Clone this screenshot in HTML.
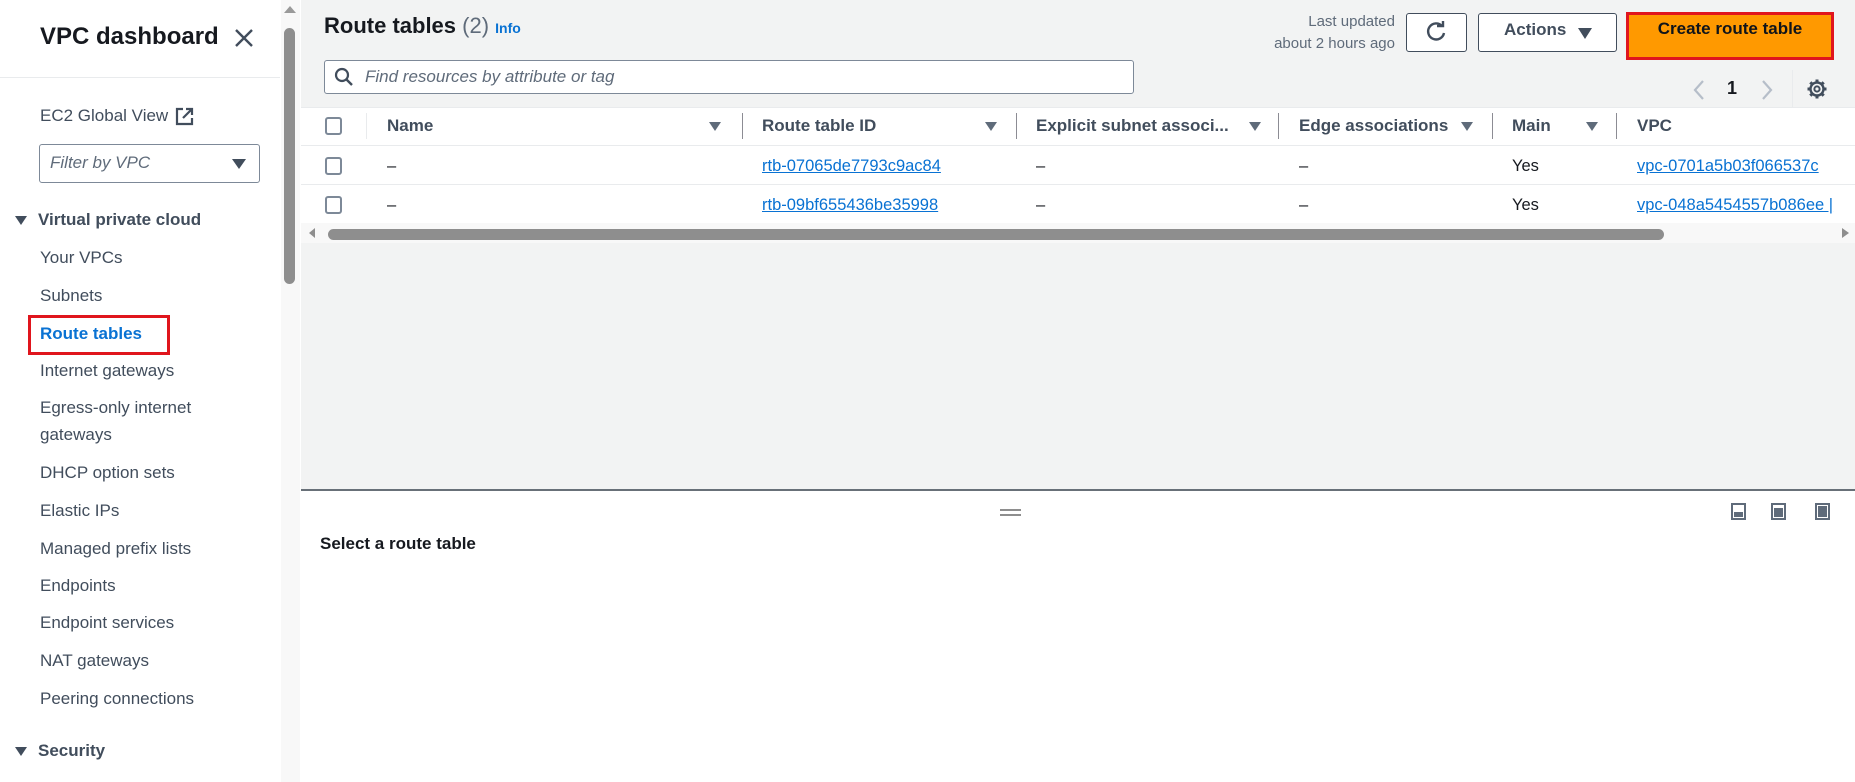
<!DOCTYPE html>
<html><head><meta charset="utf-8"><style>
*{box-sizing:border-box;margin:0;padding:0}
body{width:1855px;height:782px;overflow:hidden;font-family:"Liberation Sans",sans-serif;background:#fff;position:relative;color:#16191f}
.a{position:absolute;white-space:nowrap}
.nav{font-size:17px;color:#414d5c}
.hd{font-size:17px;font-weight:bold;color:#414d5c}
.cell{font-size:16.5px;color:#16191f}
.lnk{color:#0972d3;text-decoration:underline;font-size:16.5px}
.sep{position:absolute;width:1px;height:26px;background:#8c8c94;top:113px}
.tri{position:absolute;width:0;height:0;border-left:6px solid transparent;border-right:6px solid transparent;border-top:9px solid #5f6b7a}
.cb{position:absolute;left:325px;width:17px;height:18px;border:2px solid #7d8998;border-radius:3px;background:#fff}
</style></head><body>
<div class="a" style="left:0;top:0;width:300px;height:782px;border-right:1px solid #e9ebed;background:#fff"></div>
<div class="a" style="left:40px;top:23px;font-size:24px;font-weight:bold;color:#16191f">VPC dashboard</div>
<svg class="a" style="left:234px;top:28px" width="20" height="20" viewBox="0 0 20 20"><path d="M2 2L18 18M18 2L2 18" stroke="#414d5c" stroke-width="2.4"/></svg>
<div class="a" style="left:0;top:77px;width:280px;height:1px;background:#e9ebed"></div>
<div class="a nav" style="left:40px;top:106px">EC2 Global View</div>
<svg class="a" style="left:175px;top:107px" width="19" height="19" viewBox="0 0 19 19"><path d="M8 2H2V17H17V11M11 2H17V8M17 2L8 11" stroke="#414d5c" stroke-width="2.2" fill="none"/></svg>
<div class="a" style="left:39px;top:144px;width:221px;height:39px;border:1px solid #7d8998;border-radius:3px"></div>
<div class="a nav" style="left:50px;top:153px;font-style:italic;color:#5f6b7a">Filter by VPC</div>
<div class="tri" style="left:232px;top:159px;border-left-width:7px;border-right-width:7px;border-top-width:10px;border-top-color:#414d5c"></div>
<div class="tri" style="left:15px;top:216px;border-top-color:#414d5c"></div>
<div class="a hd" style="left:38px;top:210px">Virtual private cloud</div>
<div class="a nav" style="left:40px;top:248px">Your VPCs</div>
<div class="a nav" style="left:40px;top:286px">Subnets</div>
<div class="a" style="left:28px;top:315px;width:142px;height:40px;border:3px solid #e0151d"></div>
<div class="a nav" style="left:40px;top:324px;color:#0972d3;font-weight:bold">Route tables</div>
<div class="a nav" style="left:40px;top:361px">Internet gateways</div>
<div class="a nav" style="left:40px;top:398px">Egress-only internet</div>
<div class="a nav" style="left:40px;top:425px">gateways</div>
<div class="a nav" style="left:40px;top:463px">DHCP option sets</div>
<div class="a nav" style="left:40px;top:501px">Elastic IPs</div>
<div class="a nav" style="left:40px;top:539px">Managed prefix lists</div>
<div class="a nav" style="left:40px;top:576px">Endpoints</div>
<div class="a nav" style="left:40px;top:613px">Endpoint services</div>
<div class="a nav" style="left:40px;top:651px">NAT gateways</div>
<div class="a nav" style="left:40px;top:689px">Peering connections</div>
<div class="tri" style="left:15px;top:747px;border-top-color:#414d5c"></div>
<div class="a hd" style="left:38px;top:741px">Security</div>
<div class="a" style="left:281px;top:0;width:19px;height:782px;background:#f8f8f8"></div>
<div class="a" style="left:284px;top:28px;width:11px;height:256px;border-radius:6px;background:#8e8e8e"></div>
<div class="tri" style="left:284px;top:6px;border-top:none;border-bottom:7px solid #9a9a9a;border-left-width:6px;border-right-width:6px"></div>
<div class="a" style="left:301px;top:0;width:1554px;height:490px;background:#f2f3f3"></div>
<div class="a" style="left:324px;top:13px;font-size:22px;font-weight:bold;color:#16191f">Route tables <span style="font-weight:normal;color:#5f6b7a">(2)</span> <span style="font-size:14px;color:#0972d3;font-weight:bold">Info</span></div>
<div class="a" style="left:1245px;top:11px;width:150px;text-align:right;font-size:15px;color:#5f6b7a;line-height:22px">Last updated<br>about 2 hours ago</div>
<div class="a" style="left:1406px;top:13px;width:61px;height:39px;border:1px solid #414d5c;border-radius:3px;background:#fff"></div>
<svg class="a" style="left:1425px;top:21px" width="22" height="22" viewBox="0 0 22 22"><path d="M17 5A8 8 0 1 0 19 12" stroke="#414d5c" stroke-width="2.4" fill="none"/><path d="M12 4H18V-1" stroke="#414d5c" stroke-width="2.4" fill="none" transform="translate(0,1)"/></svg>
<div class="a" style="left:1478px;top:13px;width:139px;height:39px;border:1px solid #414d5c;border-radius:3px;background:#fff"></div>
<div class="a" style="left:1504px;top:20px;font-size:17px;font-weight:bold;color:#414d5c">Actions</div>
<div class="tri" style="left:1578px;top:28px;border-left-width:7px;border-right-width:7px;border-top-width:11px;border-top-color:#414d5c"></div>
<div class="a" style="left:1626px;top:12px;width:208px;height:48px;border:3px solid #e0151d;background:#ff9900"></div>
<div class="a" style="left:1626px;top:19px;width:208px;text-align:center;font-size:17px;font-weight:bold;color:#0f141a">Create route table</div>
<div class="a" style="left:324px;top:60px;width:810px;height:34px;border:1px solid #7d8998;border-radius:3px;background:#fff"></div>
<svg class="a" style="left:334px;top:67px" width="20" height="20" viewBox="0 0 20 20"><circle cx="8" cy="8" r="6" stroke="#414d5c" stroke-width="2.2" fill="none"/><path d="M12.5 12.5L18 18" stroke="#414d5c" stroke-width="2.4"/></svg>
<div class="a" style="left:365px;top:67px;font-size:17px;font-style:italic;color:#5f6b7a">Find resources by attribute or tag</div>
<svg class="a" style="left:1692px;top:79px" width="14" height="22" viewBox="0 0 14 22"><path d="M11 2L3 11L11 20" stroke="#b6bec9" stroke-width="2.2" fill="none"/></svg>
<div class="a" style="left:1727px;top:78px;font-size:18px;font-weight:bold">1</div>
<svg class="a" style="left:1760px;top:79px" width="14" height="22" viewBox="0 0 14 22"><path d="M3 2L11 11L3 20" stroke="#b6bec9" stroke-width="2.2" fill="none"/></svg>
<div class="a" style="left:1792px;top:70px;width:1px;height:38px;background:#e9ebed"></div>
<svg class="a" style="left:1806px;top:78px" width="22" height="22" viewBox="0 0 22 22"><circle cx="11" cy="11" r="6.5" stroke="#414d5c" stroke-width="2.4" fill="none"/><circle cx="11" cy="11" r="2.6" stroke="#414d5c" stroke-width="2" fill="none"/><path d="M11 1.5V5M11 17V20.5M1.5 11H5M17 11H20.5M4.3 4.3L6.7 6.7M15.3 15.3L17.7 17.7M4.3 17.7L6.7 15.3M15.3 6.7L17.7 4.3" stroke="#414d5c" stroke-width="3"/></svg>
<div class="a" style="left:301px;top:107px;width:1554px;height:116px;background:#fff;border-top:1px solid #e9ebed"></div>
<div class="a" style="left:301px;top:145px;width:1554px;height:1px;background:#e9ebed"></div>
<div class="a" style="left:301px;top:184px;width:1554px;height:1px;background:#e9ebed"></div>
<div class="cb" style="top:117px"></div>
<div class="sep" style="left:366px;background:#e9ebed"></div>
<div class="a hd" style="left:387px;top:116px;color:#414d5c">Name</div><div class="tri" style="left:709px;top:122px"></div>
<div class="sep" style="left:742px"></div>
<div class="a hd" style="left:762px;top:116px">Route table ID</div><div class="tri" style="left:985px;top:122px"></div>
<div class="sep" style="left:1016px"></div>
<div class="a hd" style="left:1036px;top:116px">Explicit subnet associ...</div><div class="tri" style="left:1249px;top:122px"></div>
<div class="sep" style="left:1278px"></div>
<div class="a hd" style="left:1299px;top:116px">Edge associations</div><div class="tri" style="left:1461px;top:122px"></div>
<div class="sep" style="left:1492px"></div>
<div class="a hd" style="left:1512px;top:116px">Main</div><div class="tri" style="left:1586px;top:122px"></div>
<div class="sep" style="left:1616px"></div>
<div class="a hd" style="left:1637px;top:116px">VPC</div>
<div class="cb" style="top:157px"></div>
<div class="a cell" style="left:387px;top:157px">–</div>
<div class="a lnk" style="left:762px;top:157px">rtb-07065de7793c9ac84</div>
<div class="a cell" style="left:1036px;top:157px">–</div>
<div class="a cell" style="left:1299px;top:157px">–</div>
<div class="a cell" style="left:1512px;top:157px">Yes</div>
<div class="a lnk" style="left:1637px;top:157px">vpc-0701a5b03f066537c</div>
<div class="cb" style="top:196px"></div>
<div class="a cell" style="left:387px;top:196px">–</div>
<div class="a lnk" style="left:762px;top:196px">rtb-09bf655436be35998</div>
<div class="a cell" style="left:1036px;top:196px">–</div>
<div class="a cell" style="left:1299px;top:196px">–</div>
<div class="a cell" style="left:1512px;top:196px">Yes</div>
<div class="a lnk" style="left:1637px;top:196px">vpc-048a5454557b086ee |</div>
<div class="a" style="left:301px;top:223px;width:1554px;height:20px;background:#f8f8f8"></div>
<div class="tri" style="left:309px;top:228px;border:none;border-top:5px solid transparent;border-bottom:5px solid transparent;border-right:6px solid #8e8e8e"></div>
<div class="a" style="left:328px;top:229px;width:1336px;height:11px;border-radius:6px;background:#8e8e8e"></div>
<div class="tri" style="left:1842px;top:228px;border:none;border-top:5px solid transparent;border-bottom:5px solid transparent;border-left:7px solid #8e8e8e"></div>
<div class="a" style="left:301px;top:489px;width:1554px;height:2px;background:#687078"></div>
<div class="a" style="left:1000px;top:509px;width:21px;height:2px;background:#8e8e8e"></div>
<div class="a" style="left:1000px;top:514px;width:21px;height:2px;background:#8e8e8e"></div>
<div class="a" style="left:320px;top:534px;font-size:17px;font-weight:bold">Select a route table</div>
<div class="a" style="left:1731px;top:503px;width:15px;height:17px;border:2px solid #5f6b7a"></div><div class="a" style="left:1734px;top:512px;width:9px;height:5px;background:#5f6b7a"></div>
<div class="a" style="left:1771px;top:503px;width:15px;height:17px;border:2px solid #5f6b7a"></div><div class="a" style="left:1774px;top:508px;width:9px;height:9px;background:#5f6b7a"></div>
<div class="a" style="left:1815px;top:503px;width:15px;height:17px;border:2px solid #5f6b7a"></div><div class="a" style="left:1818px;top:506px;width:9px;height:11px;background:#5f6b7a"></div>
</body></html>
